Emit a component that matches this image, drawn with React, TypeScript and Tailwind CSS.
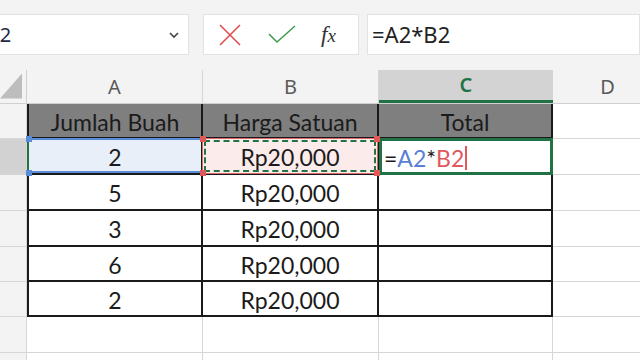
import React from "react";

const cellFont = "font-['Lato','Liberation_Sans',sans-serif]";
const uiFont = "font-['Noto_Sans','Open_Sans',sans-serif]";

const data = [
  ["2", "Rp20,000"],
  ["5", "Rp20,000"],
  ["3", "Rp20,000"],
  ["6", "Rp20,000"],
  ["2", "Rp20,000"],
];

const rowHeights = [36, 36, 36, 35, 35];

function Corner({ className }: { className: string }) {
  return <div className={`absolute w-[6px] h-[6px] ${className}`} />;
}

export default function App() {
  return (
    <div className="w-[640px] h-[360px] overflow-hidden bg-white flex flex-col">
      {/* Formula bar area */}
      <div className="h-[70px] shrink-0 bg-[#f3f3f3] flex pt-[14px] items-start">
        <div className="ml-[-20px] w-[209px] h-[41px] bg-white border border-[#e2e2e2] flex items-center justify-between pl-[6px] pr-[8px]">
          <span className={`${uiFont} text-[20px] text-[#1f2a44]`}>C2</span>
          <svg width="12" height="8" viewBox="0 0 12 8">
            <polyline points="2,2 6,6 10,2" fill="none" stroke="#444" strokeWidth="1.6" />
          </svg>
        </div>
        <div className="ml-[14px] w-[156px] h-[41px] bg-white border border-[#e2e2e2] flex items-center">
          <svg width="24" height="24" viewBox="0 0 24 24" className="ml-[14px]">
            <path d="M2 2 L22 22 M22 2 L2 22" stroke="#e0474c" strokeWidth="1.5" fill="none" />
          </svg>
          <svg width="28" height="20" viewBox="0 0 28 20" className="ml-[26px]">
            <path d="M1 9 L9 17 L27 1" stroke="#3f9b4b" strokeWidth="1.5" fill="none" />
          </svg>
          <span className="ml-[25px] font-['Liberation_Serif',serif] italic text-[23px] text-[#333] leading-none">
            f<span className="text-[19px]">x</span>
          </span>
        </div>
        <div className="ml-[8px] flex-1 h-[41px] bg-white border border-[#e2e2e2] flex items-center pl-[4px]">
          <span className={`${uiFont} text-[22px] text-[#222]`}>=A2*B2</span>
        </div>
      </div>

      {/* Column headers */}
      <div className={`h-[34px] shrink-0 flex bg-[#f3f3f3] border-b border-[#d0d0d0] ${uiFont}`}>
        <div className="w-[27px] shrink-0 border-r border-[#d0d0d0] flex items-end justify-end pb-[4px] pr-[4px]">
          <svg width="23" height="26" viewBox="0 0 23 26">
            <polygon points="23,0 23,26 0,26" fill="#bdbdbd" />
          </svg>
        </div>
        <div className="w-[176px] shrink-0 border-r border-[#d6d6d6] flex items-center justify-center text-[20px] text-[#5a5a5a]">A</div>
        <div className="w-[176px] shrink-0 border-r border-[#d6d6d6] flex items-center justify-center text-[20px] text-[#5a5a5a]">B</div>
        <div className="w-[174px] shrink-0 bg-[#d3d3d3] border-b-[3px] border-[#217346] flex items-center justify-center text-[20px] text-[#217346] font-semibold">C</div>
        <div className="w-[110px] shrink-0 border-r border-[#d6d6d6] flex items-center justify-center text-[20px] text-[#5a5a5a]">D</div>
      </div>

      {/* Table header row */}
      <div className={`h-[35px] shrink-0 flex ${cellFont} text-[23px] text-[#1b1b1b]`}>
        <div className="w-[27px] shrink-0 bg-[#f3f3f3] border-r border-b border-[#d6d6d6]" />
        <div className="w-[176px] shrink-0 bg-[#7f7f7f] border-l-2 border-r-2 border-b-2 border-[#1a1a1a] flex items-center justify-center pt-[3px]">Jumlah Buah</div>
        <div className="w-[176px] shrink-0 bg-[#7f7f7f] border-r-2 border-b-2 border-[#1a1a1a] flex items-center justify-center pt-[3px]">Harga Satuan</div>
        <div className="w-[174px] shrink-0 bg-[#7f7f7f] border-r-2 border-b-2 border-[#1a1a1a] flex items-center justify-center pt-[3px]">Total</div>
        <div className="w-[110px] shrink-0 border-b border-[#d6d6d6]" />
      </div>

      {/* Data rows */}
      {data.map(([a, b], i) => {
        const active = i === 0;
        return (
          <div key={i} className={`shrink-0 flex ${cellFont} text-[23px] text-[#1b1b1b]`} style={{ height: rowHeights[i] }}>
            <div className={`w-[27px] shrink-0 border-r border-b border-[#d6d6d6] ${active ? "bg-[#d2d2d2]" : "bg-[#f3f3f3]"}`} />
            {active ? (
              <>
                <div className="relative w-[176px] shrink-0 bg-[#e9eff9] border-l-2 border-l-[#217346] border-r-2 border-r-[#1a1a1a] border-b-2 border-b-[#1a1a1a] flex items-center justify-center pt-[3px]">
                  <div className="absolute left-0 right-0 top-[-1px] h-[2px] bg-[#5b8bd6]" />
                  <div className="absolute left-0 right-0 bottom-[0px] h-[2px] bg-[#5b8bd6]" />
                  <Corner className="left-[-3px] top-[-3px] bg-[#5b8bd6]" />
                  <Corner className="left-[-3px] bottom-[-3px] bg-[#5b8bd6]" />
                  {a}
                </div>
                <div className="relative w-[176px] shrink-0 bg-[#fcebeb] border-r-2 border-b-2 border-[#1a1a1a] flex items-center justify-center pt-[3px]">
                  <div className="absolute inset-[-1px] border border-[#e06666]" />
                  <div className="absolute left-[1px] right-[1px] top-[1px] bottom-[1px] border-2 border-dashed border-[#217346]" />
                  <Corner className="left-[-3px] top-[-3px] bg-[#e05a5a]" />
                  <Corner className="left-[-3px] bottom-[-3px] bg-[#e05a5a]" />
                  <Corner className="right-[-3px] top-[-3px] bg-[#e05a5a]" />
                  <Corner className="right-[-3px] bottom-[-3px] bg-[#e05a5a]" />
                  <span className="relative">{b}</span>
                </div>
                <div className="w-[174px] shrink-0 bg-white border-[3px] border-[#217346] -mt-[1px] flex items-center pl-[2px] pt-[3px]">
                  <span>=</span>
                  <span className="text-[#5b7fd6]">A2</span>
                  <span>*</span>
                  <span className="text-[#e0585c]">B2</span>
                  <span className="w-[2px] h-[24px] bg-[#e0585c] ml-[1px]" />
                </div>
              </>
            ) : (
              <>
                <div className="w-[176px] shrink-0 border-l-2 border-r-2 border-b-2 border-[#1a1a1a] flex items-center justify-center pt-[3px]">{a}</div>
                <div className="w-[176px] shrink-0 border-r-2 border-b-2 border-[#1a1a1a] flex items-center justify-center pt-[3px]">{b}</div>
                <div className="w-[174px] shrink-0 border-r-2 border-b-2 border-[#1a1a1a]" />
              </>
            )}
            <div className="w-[110px] shrink-0 border-b border-[#d6d6d6]" />
          </div>
        );
      })}

      {/* Empty rows */}
      {[36, 36].map((h, i) => (
        <div key={i} className="shrink-0 flex" style={{ height: h }}>
          <div className="w-[27px] shrink-0 bg-[#f3f3f3] border-r border-b border-[#d6d6d6]" />
          <div className="w-[176px] shrink-0 border-r border-b border-[#d6d6d6]" />
          <div className="w-[176px] shrink-0 border-r border-b border-[#d6d6d6]" />
          <div className="w-[174px] shrink-0 border-r border-b border-[#d6d6d6]" />
          <div className="w-[110px] shrink-0 border-b border-[#d6d6d6]" />
        </div>
      ))}
    </div>
  );
}
